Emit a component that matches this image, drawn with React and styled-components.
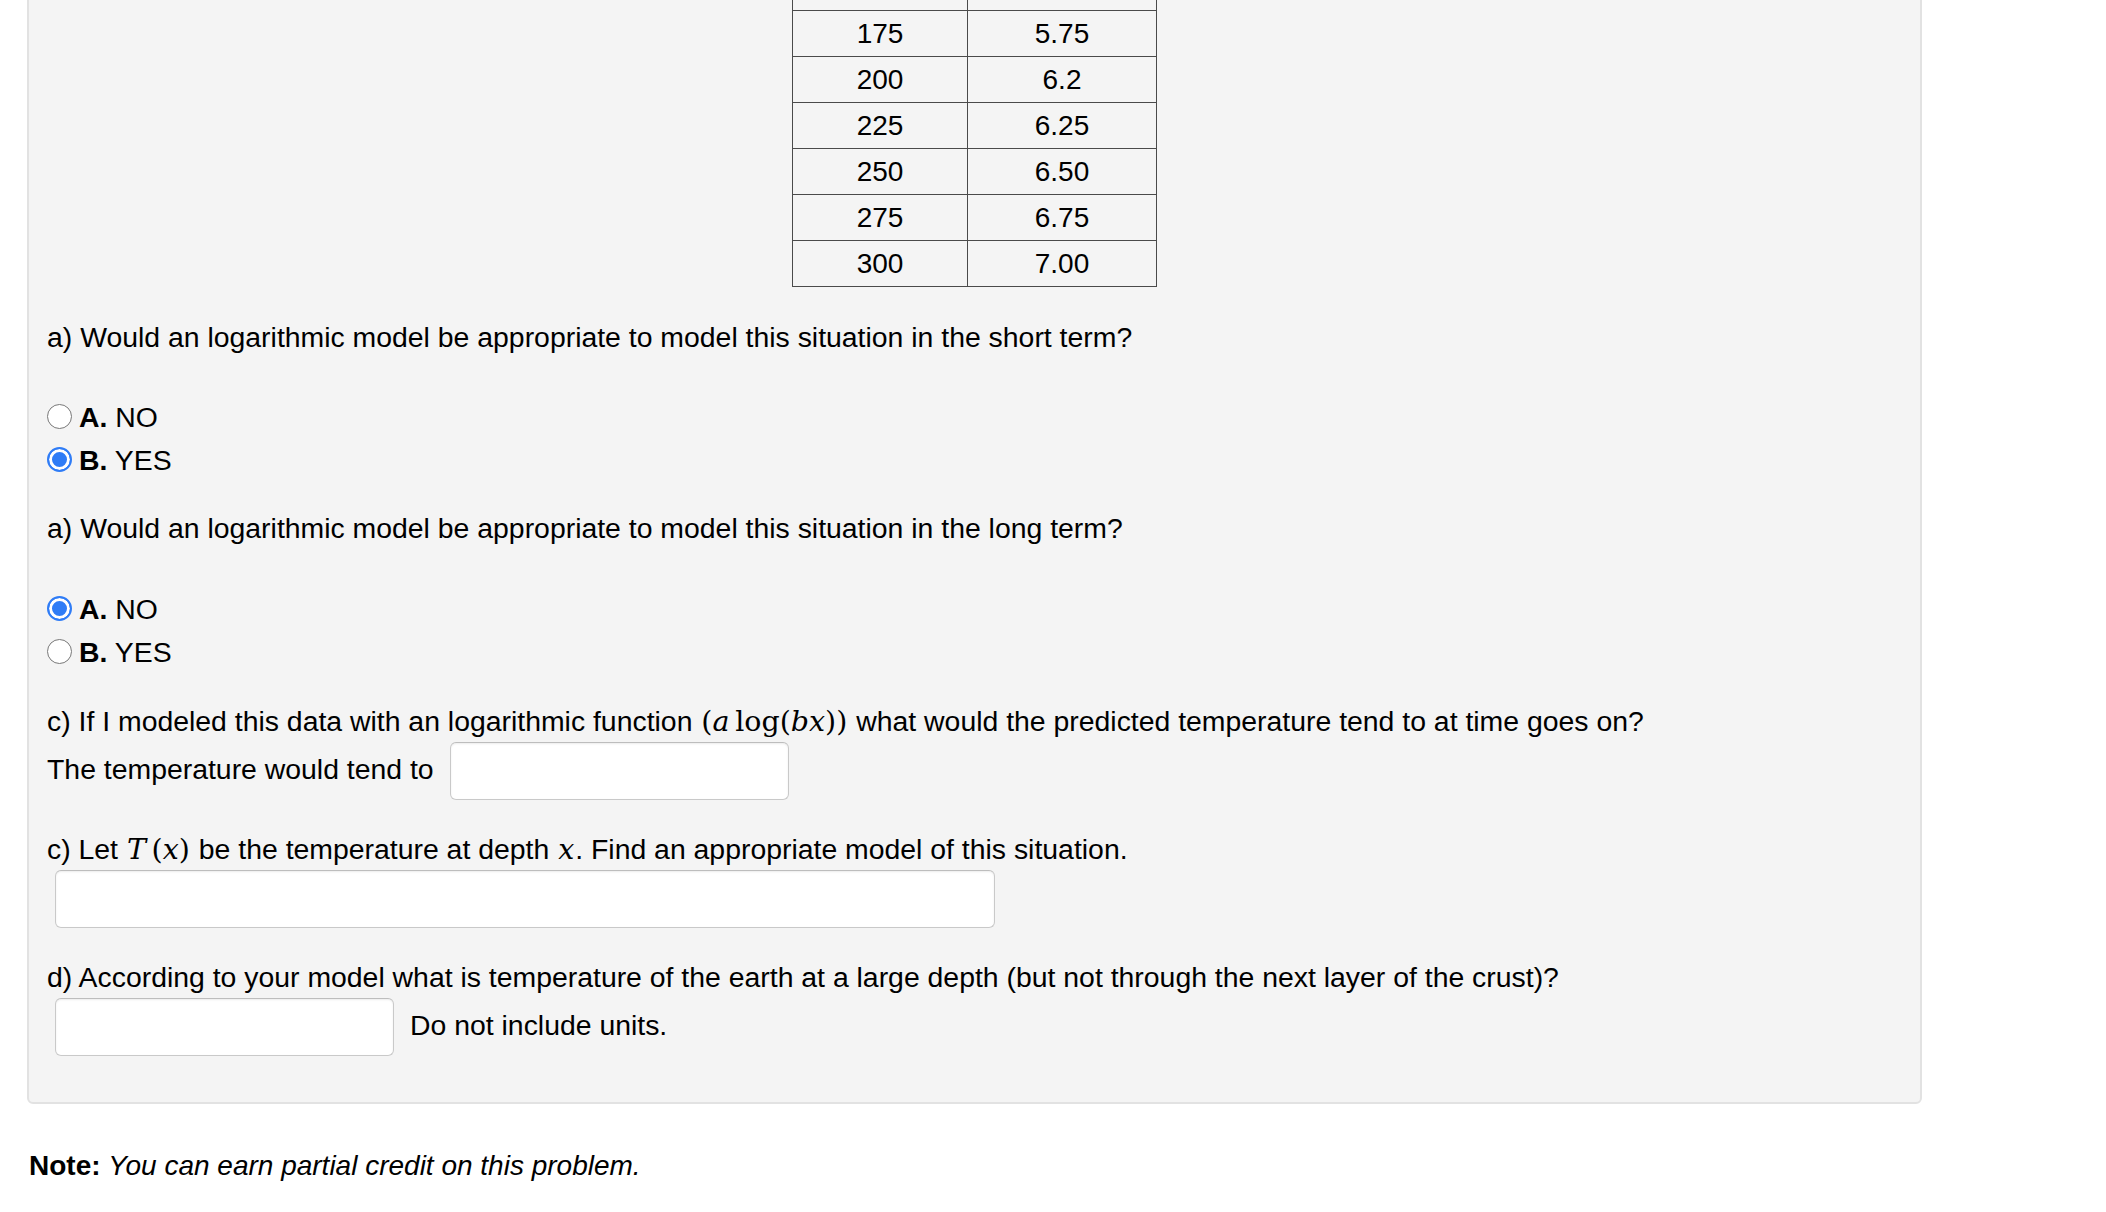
import React from 'react'
import styled, { createGlobalStyle } from 'styled-components'

const Global = createGlobalStyle`
  body {
    margin: 0;
    background: #fff;
    color: #000;
    font-family: "Liberation Sans", Arial, Helvetica, sans-serif;
  }
`

const Page = styled.div`
  padding: 0 27px 40px;
  font-size: 28px;
  line-height: 32px;
`

const Panel = styled.div`
  width: 1895px;
  box-sizing: border-box;
  margin-top: -56px;
  padding: 18px 18px 46px;
  background: #f4f4f4;
  border: 2px solid #e2e2e2;
  border-radius: 6px;
  font-size: 28.4px;
`

const DataTable = styled.table`
  margin: 0 auto;
  border-collapse: collapse;
  font-size: 28px;
`

const Cell = styled.td`
  width: ${p => p.$w}px;
  height: 46px;
  padding: 0;
  box-sizing: border-box;
  text-align: center;
  border: 1.5px solid #4a4a4a;
`

const Question = styled.p`
  margin: ${p => p.$mt}px 0 0;
`

const RadioGroup = styled.div`
  margin-top: ${p => p.$mt}px;
  display: flex;
  flex-direction: column;
`

const RadioRow = styled.label`
  display: flex;
  align-items: center;
  gap: 7px;
  height: 43px;
`

const Radio = styled.input`
  appearance: none;
  margin: 0;
  width: 25px;
  height: 25px;
  box-sizing: border-box;
  border-radius: 50%;
  border: 1.5px solid #787878;
  background: #fff;

  &:checked {
    border: 2px solid #2f7cf6;
    background: #2f7cf6;
    box-shadow: inset 0 0 0 3px #fff;
  }
`

const AnswerRow = styled.div`
  margin-top: ${p => p.$mt}px;
  padding-left: ${p => p.$pl || 0}px;
  display: flex;
  align-items: center;
  gap: 16px;
`

const RowText = styled.span`
  padding-bottom: 5px;
`

const Field = styled.input`
  width: ${p => p.$w}px;
  height: 58px;
  box-sizing: border-box;
  margin: 0;
  background: #fff;
  border: 1.5px solid #c9c9c9;
  border-top-color: #bdbdbd;
  border-radius: 6px;
  box-shadow: inset 0 1px 2px rgba(0, 0, 0, 0.08);
`

const Math = styled.span`
  font-family: "DejaVu Serif", "Liberation Serif", serif;
  font-size: 28.5px;
  padding: 0 1px;
`

const Var = styled.i`
  font-style: italic;
`

const Note = styled.p`
  margin: 46px 0 0;
  padding-left: 2px;

  em {
    font-style: italic;
  }
`

const rows = [
  ['', ''],
  ['175', '5.75'],
  ['200', '6.2'],
  ['225', '6.25'],
  ['250', '6.50'],
  ['275', '6.75'],
  ['300', '7.00'],
]

const Choice = ({ name, letter, text, checked }) => (
  <RadioRow>
    <Radio type="radio" name={name} defaultChecked={checked} />
    <span>
      <b>{letter}.</b> {text}
    </span>
  </RadioRow>
)

export default function App() {
  return (
    <Page>
      <Global />
      <Panel>
        <DataTable>
          <tbody>
            {rows.map((r, i) => (
              <tr key={i}>
                <Cell $w={175}>{r[0]}</Cell>
                <Cell $w={189}>{r[1]}</Cell>
              </tr>
            ))}
          </tbody>
        </DataTable>

        <Question $mt={34}>
          a) Would an logarithmic model be appropriate to model this situation in the short term?
        </Question>
        <RadioGroup $mt={42}>
          <Choice name="short" letter="A" text="NO" />
          <Choice name="short" letter="B" text="YES" checked />
        </RadioGroup>

        <Question $mt={31}>
          a) Would an logarithmic model be appropriate to model this situation in the long term?
        </Question>
        <RadioGroup $mt={43}>
          <Choice name="long" letter="A" text="NO" checked />
          <Choice name="long" letter="B" text="YES" />
        </RadioGroup>

        <Question $mt={32}>
          c) If I modeled this data with an logarithmic function{' '}
          <Math>
            (<Var>a</Var>&thinsp;log(<Var>bx</Var>))
          </Math>{' '}
          what would the predicted temperature tend to at time goes on?
        </Question>
        <AnswerRow $mt={4}>
          <RowText>The temperature would tend to</RowText>
          <Field $w={339} />
        </AnswerRow>

        <Question $mt={33}>
          c) Let{' '}
          <Math>
            <Var>T</Var>&thinsp;(<Var>x</Var>)
          </Math>{' '}
          be the temperature at depth{' '}
          <Math>
            <Var>x</Var>
          </Math>
          . Find an appropriate model of this situation.
        </Question>
        <AnswerRow $mt={4} $pl={8}>
          <Field $w={940} />
        </AnswerRow>

        <Question $mt={33}>
          d) According to your model what is temperature of the earth at a large depth (but not through the next layer of the crust)?
        </Question>
        <AnswerRow $mt={5} $pl={8}>
          <Field $w={339} />
          <RowText>Do not include units.</RowText>
        </AnswerRow>
      </Panel>

      <Note>
        <b>Note:</b> <em>You can earn partial credit on this problem.</em>
      </Note>
    </Page>
  )
}
